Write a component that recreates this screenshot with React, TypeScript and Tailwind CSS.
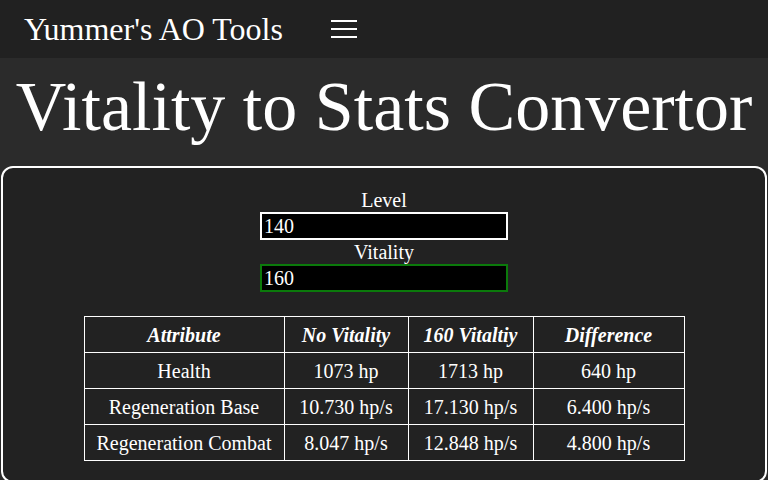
import React from "react";

const rows = [
  ["Health", "1073 hp", "1713 hp", "640 hp"],
  ["Regeneration Base", "10.730 hp/s", "17.130 hp/s", "6.400 hp/s"],
  ["Regeneration Combat", "8.047 hp/s", "12.848 hp/s", "4.800 hp/s"],
];

export default function App() {
  return (
    <div className="min-h-[480px] bg-[#2b2b2b] text-white font-['Liberation_Serif',serif]">
      <nav className="h-[58px] bg-[#212121] flex items-center pl-[24px]">
        <span className="text-[32px] leading-none">Yummer's AO Tools</span>
        <svg width="26" height="20" viewBox="0 0 26 20" className="ml-[48px]">
          <rect x="0" y="1" width="26" height="2" fill="#fff" />
          <rect x="0" y="9" width="26" height="2" fill="#fff" />
          <rect x="0" y="17" width="26" height="2" fill="#fff" />
        </svg>
      </nav>
      <h1 className="text-center text-[70px] leading-[96px] pt-[1px] h-[108px]">Vitality to Stats Convertor</h1>
      <div className="mx-px border-2 border-white rounded-[12px] bg-[#222222] pt-[20px] pb-[20px]">
        <div className="flex flex-col items-center text-[20px]">
          <label className="leading-[24px]">Level</label>
          <input
            defaultValue="140"
            className="w-[248px] h-[28px] bg-black border-2 border-white px-[2px] text-[20px] leading-none outline-none"
          />
          <label className="leading-[24px]">Vitality</label>
          <input
            defaultValue="160"
            className="w-[248px] h-[28px] bg-black border-2 border-[#0b7a0b] px-[2px] text-[20px] leading-none outline-none"
          />
        </div>
        <table className="mx-auto mt-[24px] border-collapse text-[20px] text-center">
          <thead>
            <tr className="h-[36px]">
              <th className="w-[200px] border border-white italic font-bold">Attribute</th>
              <th className="w-[124px] border border-white italic font-bold">No Vitality</th>
              <th className="w-[125px] border border-white italic font-bold">160 Vitaltiy</th>
              <th className="w-[151px] border border-white italic font-bold">Difference</th>
            </tr>
          </thead>
          <tbody>
            {rows.map((r) => (
              <tr key={r[0]} className="h-[36px]">
                {r.map((c, i) => (
                  <td key={i} className="border border-white">{c}</td>
                ))}
              </tr>
            ))}
          </tbody>
        </table>
      </div>
    </div>
  );
}
